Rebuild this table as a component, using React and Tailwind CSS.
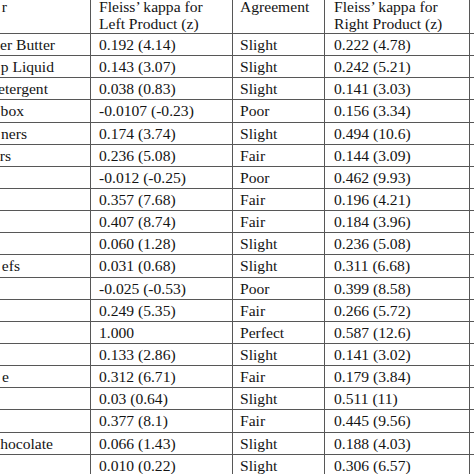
import React from "react";

const rows = [
  ["er Butter", "w-[55px]", "0.192 (4.14)", "Slight", "0.222 (4.78)"],
  ["p Liquid", "w-[54px]", "0.143 (3.07)", "Slight", "0.242 (5.21)"],
  ["etergent", "w-[48px]", "0.038 (0.83)", "Slight", "0.141 (3.03)"],
  ["box", "w-[24px]", "-0.0107 (-0.23)", "Poor", "0.156 (3.34)"],
  ["ners", "w-[27px]", "0.174 (3.74)", "Slight", "0.494 (10.6)"],
  ["rs", "w-[11px]", "0.236 (5.08)", "Fair", "0.144 (3.09)"],
  ["", "w-[10px]", "-0.012 (-0.25)", "Poor", "0.462 (9.93)"],
  ["", "w-[10px]", "0.357 (7.68)", "Fair", "0.196 (4.21)"],
  ["", "w-[10px]", "0.407 (8.74)", "Fair", "0.184 (3.96)"],
  ["", "w-[10px]", "0.060 (1.28)", "Slight", "0.236 (5.08)"],
  ["efs", "w-[20px]", "0.031 (0.68)", "Slight", "0.311 (6.68)"],
  ["", "w-[10px]", "-0.025 (-0.53)", "Poor", "0.399 (8.58)"],
  ["", "w-[10px]", "0.249 (5.35)", "Fair", "0.266 (5.72)"],
  ["", "w-[10px]", "1.000", "Perfect", "0.587 (12.6)"],
  ["", "w-[10px]", "0.133 (2.86)", "Slight", "0.141 (3.02)"],
  ["e", "w-[9px]", "0.312 (6.71)", "Fair", "0.179 (3.84)"],
  ["", "w-[10px]", "0.03 (0.64)", "Slight", "0.511 (11)"],
  ["", "w-[10px]", "0.377 (8.1)", "Fair", "0.445 (9.56)"],
  ["hocolate", "w-[53px]", "0.066 (1.43)", "Slight", "0.188 (4.03)"],
  ["", "w-[10px]", "0.010 (0.22)", "Slight", "0.306 (6.57)"],
];

const line = "border-[#575757]";

export default function App() {
  return (
    <div
      className="w-[474px] h-[474px] overflow-hidden bg-white text-[#141414] text-[15.6px] leading-[17px]"
      style={{ fontFamily: '"Liberation Serif", "Times New Roman", serif' }}
    >
      <div className={`flex h-[34px] border-b-[1.5px] ${line}`}>
        <div className={`w-[91px] shrink-0 border-r-[1.5px] ${line} flex flex-col justify-end pb-[1px]`}>
          <div className="w-[7px] flex justify-end whitespace-nowrap">r</div>
          <div>&nbsp;</div>
        </div>
        <div className={`w-[142px] shrink-0 border-r-[1.5px] ${line} flex flex-col justify-end pb-[1px] pl-[8px] whitespace-nowrap`}>
          <div>Fleiss’ kappa for</div>
          <div>Left Product (z)</div>
        </div>
        <div className={`w-[92px] shrink-0 border-r-[1.5px] ${line} flex flex-col justify-end pb-[1px] pl-[7px] whitespace-nowrap`}>
          <div>Agreement</div>
          <div>&nbsp;</div>
        </div>
        <div className={`w-[145px] shrink-0 border-r-[1.5px] ${line} flex flex-col justify-end pb-[1px] pl-[9px] whitespace-nowrap`}>
          <div>Fleiss’ kappa for</div>
          <div>Right Product (z)</div>
        </div>
        <div className="flex-1" />
      </div>
      {rows.map((r, i) => (
        <div key={i} className={`flex h-[22.15px] shrink-0 border-b-[1.5px] ${line}`}>
          <div className={`w-[91px] shrink-0 border-r-[1.5px] ${line} flex items-center`}>
            <div className={`${r[1]} flex justify-end whitespace-nowrap`}>{r[0] || "\u00a0"}</div>
          </div>
          <div className={`w-[142px] shrink-0 border-r-[1.5px] ${line} flex items-center pl-[8px] whitespace-nowrap`}>
            {r[2]}
          </div>
          <div className={`w-[92px] shrink-0 border-r-[1.5px] ${line} flex items-center pl-[7px] whitespace-nowrap`}>
            {r[3]}
          </div>
          <div className={`w-[145px] shrink-0 border-r-[1.5px] ${line} flex items-center pl-[9px] whitespace-nowrap`}>
            {r[4]}
          </div>
          <div className="flex-1" />
        </div>
      ))}
    </div>
  );
}
